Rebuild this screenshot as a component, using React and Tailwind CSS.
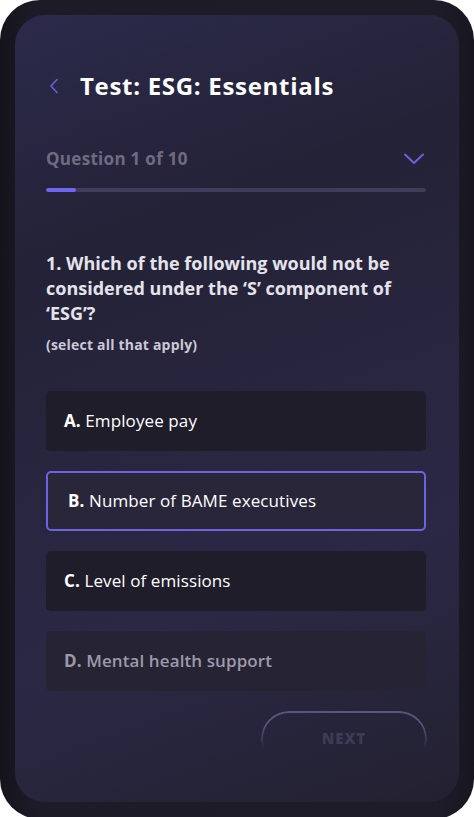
import React from "react";

const options = [
  { letter: "A.", text: "Employee pay", state: "normal" },
  { letter: "B.", text: "Number of BAME executives", state: "selected" },
  { letter: "C.", text: "Level of emissions", state: "normal" },
  { letter: "D.", text: "Mental health support", state: "faded" },
];

export default function App() {
  return (
    <div className="w-[474px] h-[817px] bg-white overflow-hidden" style={{ fontFamily: "'Open Sans', 'Noto Sans', sans-serif" }}>
      <div className="w-[474px] h-[819px] rounded-[40px] bg-[linear-gradient(90deg,#15141c_0%,#1d1b28_8%,#1e1c29_92%,#171620_100%)] p-[15px] pb-[17px]">
        <div className="h-[787px] rounded-[30px] overflow-hidden bg-[linear-gradient(160deg,#2b2a4b_0%,#242236_28%,#292641_55%,#2b2846_70%,#232130_100%)] pl-[31px] pr-[33px] pt-[55px] flex flex-col">
          {/* Header */}
          <div className="flex items-center h-[32px]">
            <svg width="12" height="16" viewBox="0 0 12 16" className="ml-[2px] mr-[20px]" fill="none">
              <path d="M9 1.5 L3 8 L9 14.5" stroke="#6a62cf" strokeWidth="1.6" strokeLinecap="round" strokeLinejoin="round" />
            </svg>
            <h1 className="text-[24px] leading-[32px] font-bold text-white tracking-[0.7px]">Test: ESG: Essentials</h1>
          </div>

          {/* Question selector */}
          <div className="mt-[45px] flex items-center justify-between h-[24px]">
            <span className="text-[17px] font-bold text-[#6f6b82] tracking-[0.3px]">Question 1 of 10</span>
            <svg width="22" height="14" viewBox="0 0 22 14" className="mr-[1px]" fill="none">
              <path d="M2 2.5 L11 11 L20 2.5" stroke="#6a62dc" strokeWidth="2" strokeLinecap="round" strokeLinejoin="round" />
            </svg>
          </div>

          {/* Progress */}
          <div className="mt-[17px] h-[4px] w-full rounded-full bg-[#3f3c5c] overflow-hidden">
            <div className="h-full w-[30px] rounded-full bg-[#6e66f0]" />
          </div>

          {/* Question */}
          <p className="mt-[59px] text-[18px] leading-[25px] font-bold text-[#e4e3ec]">
            1. Which of the following would not be considered under the ‘S’ component of ‘ESG’?
          </p>
          <p className="mt-[10px] text-[14px] leading-[18px] font-bold text-[#cbc9d6] tracking-[0.2px]">(select all that apply)</p>

          {/* Options */}
          <div className="mt-[37px] flex flex-col gap-[20px]">
            {options.map((o) => (
              <div
                key={o.letter}
                className={
                  o.state === "selected"
                    ? "h-[60px] rounded-[5px] border-2 border-[#6b63e4] bg-[#29263a] flex items-center pl-[20px]"
                    : o.state === "faded"
                    ? "h-[60px] rounded-[5px] bg-[#262433] flex items-center pl-[18px]"
                    : "h-[60px] rounded-[5px] bg-[#1f1d2a] flex items-center pl-[18px]"
                }
              >
                <span
                  className={
                    o.state === "faded"
                      ? "text-[17px] text-[#9c99ad] tracking-[0.1px]"
                      : "text-[17px] text-white tracking-[0.1px]"
                  }
                >
                  <span className="font-bold">{o.letter}</span>{" "}
                  <span className={o.state === "faded" ? "font-semibold" : "font-normal"}>{o.text}</span>
                </span>
              </div>
            ))}
          </div>

          {/* Next */}
          <div className="mt-[20px] flex justify-end">
            <div className="relative w-[166px] h-[56px] mr-[-1px]">
              <div className="absolute inset-0 rounded-[30px] border-2 border-[#59557f] [mask-image:linear-gradient(180deg,#000_0%,#000_25%,transparent_70%)]" />
              <div className="absolute inset-0 flex items-center justify-center pb-[1px]">
                <span className="text-[15px] font-extrabold tracking-[1px] text-[#3e3b56]">NEXT</span>
              </div>
            </div>
          </div>
        </div>
      </div>
    </div>
  );
}
